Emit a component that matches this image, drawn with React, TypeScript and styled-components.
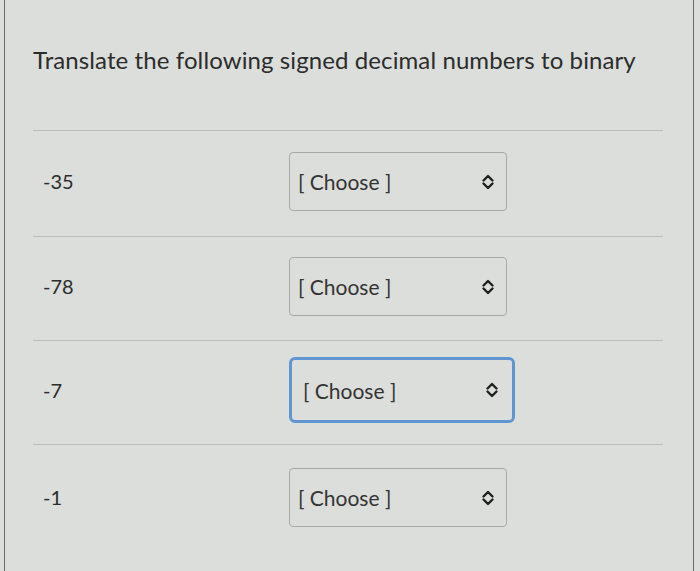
import React from "react";
import styled, { createGlobalStyle } from "styled-components";

const Global = createGlobalStyle`
  html, body { margin: 0; padding: 0; background: #dcdedb; }
  body { font-family: Lato, "Open Sans", sans-serif; color: #2b2c2b; }
`;

const Page = styled.div`
  width: 700px;
  height: 571px;
  box-sizing: border-box;
  padding: 0 6px 0 4px;
  overflow: hidden;
`;

const Frame = styled.div`
  height: 100%;
  box-sizing: border-box;
  border-left: 1px solid #6a6c6a;
  border-right: 1px solid #6a6c6a;
  padding: 44px 30px 0 28px;
`;

const Title = styled.h1`
  margin: 0;
  font-size: 24px;
  font-weight: 400;
  line-height: 32px;
  letter-spacing: 0.1px;
`;

const List = styled.div`
  margin-top: 54px;
  border-top: 1px solid #b9bbb8;
`;

const Row = styled.div<{ $first?: boolean }>`
  display: flex;
  align-items: center;
  padding: ${(p) => (p.$first ? "21px 0 25px" : "20px 0 24px")};
  border-bottom: 1px solid #b9bbb8;
  &:last-child { border-bottom: none; padding-top: 23px; }
`;

const Label = styled.div`
  width: 246px;
  padding-left: 10px;
  font-size: 20px;
  line-height: 24px;
  margin-top: -2px;
`;

const Select = styled.div<{ $focus?: boolean }>`
  width: 218px;
  height: 59px;
  box-sizing: border-box;
  display: flex;
  align-items: center;
  justify-content: space-between;
  padding: 0 11px 0 8px;
  border: 1px solid #a8aaa7;
  border-radius: 4px;
  font-size: 21px;
  color: #333433;
  ${(p) =>
    p.$focus &&
    `
    border: 3px solid #5f95d0;
    width: 226px;
    height: 66px;
    padding: 0 13px 0 11px;
    margin: -4px 0 -3px;
    border-radius: 6px;
  `}
`;

const Chevron = () => (
  <svg width="14" height="18" viewBox="0 0 14 18" fill="none">
    <path
      d="M2.5 7.5 L7 3 L11.5 7.5 M2.5 10.5 L7 15 L11.5 10.5"
      stroke="#1f201f"
      strokeWidth="2.4"
      strokeLinecap="round"
      strokeLinejoin="round"
    />
  </svg>
);

const items = [
  { n: "-35" },
  { n: "-78" },
  { n: "-7", focus: true },
  { n: "-1" },
];

export default function App() {
  return (
    <>
      <Global />
      <Page>
        <Frame>
          <Title>Translate the following signed decimal numbers to binary</Title>
          <List>
            {items.map((it, i) => (
              <Row key={it.n} $first={i === 0}>
                <Label>{it.n}</Label>
                <Select $focus={it.focus}>
                  <span>[ Choose ]</span>
                  <Chevron />
                </Select>
              </Row>
            ))}
          </List>
        </Frame>
      </Page>
    </>
  );
}
